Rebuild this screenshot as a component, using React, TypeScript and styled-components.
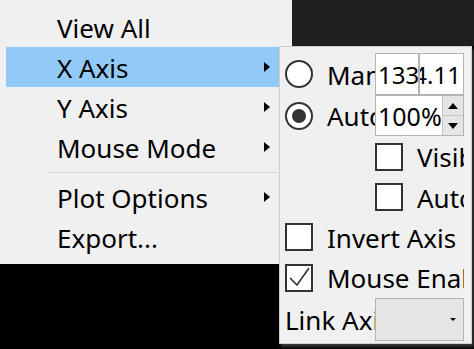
import React from "react";
import styled, { createGlobalStyle } from "styled-components";

const GlobalStyle = createGlobalStyle`
  html, body { margin: 0; padding: 0; background: #000; }
  body { font-family: "Noto Sans", "Open Sans", sans-serif; }
  * { box-sizing: border-box; }
`;

const Screen = styled.div`
  position: relative;
  width: 474px;
  height: 349px;
  overflow: hidden;
  background: #000;
  display: flex;
  flex-direction: column;
`;

const TopStrip = styled.div`
  height: 46px;
  background: #1f1f1f;
`;

const Menu = styled.div`
  position: absolute;
  left: 0;
  top: 0;
  width: 292px;
  height: 264px;
  padding: 7px 0;
  background: #f0f0f0;
  display: flex;
  flex-direction: column;
  font-size: 26px;
  color: #000;
`;

const MenuItem = styled.div<{ $active?: boolean }>`
  height: 40px;
  flex: none;
  margin: 0 6px;
  padding: 2px 16px 0 51px;
  display: flex;
  align-items: center;
  background: ${(p) => (p.$active ? "#91c9f7" : "transparent")};
  line-height: 38px;
  white-space: nowrap;
`;

const ItemLabel = styled.span`
  flex: 1;
`;

const SubArrow = styled.span`
  width: 0;
  height: 0;
  margin-top: -3px;
  border-left: 6px solid #000;
  border-top: 5px solid transparent;
  border-bottom: 5px solid transparent;
`;

const Separator = styled.div`
  height: 10px;
  flex: none;
  margin: 0 15px 0 48px;
  display: flex;
  align-items: center;
  &::before {
    content: "";
    display: block;
    width: 100%;
    height: 1px;
    background: #d7d7d7;
  }
`;

const SubMenu = styled.div`
  position: absolute;
  left: 279px;
  top: 46px;
  width: 193px;
  height: 298px;
  background: #f0f0f0;
  border: 1px solid #cfcfcf;
  box-shadow: 2px 3px 3px rgba(120, 120, 120, 0.45);
  padding: 6px 0 0 5px;
  font-size: 26px;
  color: #000;
`;

const Grid = styled.div`
  display: grid;
  grid-template-columns: 90px 44px 45px;
  grid-template-rows: 42px 41px 41px 40px 40px 41px 43px;
`;

const Cell = styled.div<{ $col: string; $row: number }>`
  grid-column: ${(p) => p.$col};
  grid-row: ${(p) => p.$row};
  display: flex;
  align-items: center;
  gap: 14px;
  overflow: hidden;
  white-space: nowrap;
  min-width: 0;
`;

const RadioCircle = styled.span<{ $checked?: boolean }>`
  flex: none;
  width: 28px;
  height: 28px;
  border-radius: 50%;
  border: 2px solid #333;
  background: #fff;
  display: flex;
  align-items: center;
  justify-content: center;
  &::after {
    content: "";
    display: ${(p) => (p.$checked ? "block" : "none")};
    width: 14px;
    height: 14px;
    border-radius: 50%;
    background: #333;
  }
`;

const CheckBox = styled.span`
  flex: none;
  width: 28px;
  height: 28px;
  border: 2px solid #333;
  background: #fff;
  display: flex;
  align-items: center;
  justify-content: center;
`;

const Label = styled.span`
  padding-top: 1px;
`;

const LineEdit = styled.div<{ $align: "start" | "end" }>`
  grid-column: ${(p) => (p.$align === "start" ? "2" : "3")};
  grid-row: 1;
  background: #fff;
  border: 1px solid #b4b4b4;
  display: flex;
  align-items: center;
  justify-content: ${(p) => (p.$align === "start" ? "flex-start" : "flex-end")};
  padding: 0 2px;
  overflow: hidden;
  font-size: 24px;
  white-space: nowrap;
`;

const SpinBox = styled.div`
  grid-column: 2 / 4;
  grid-row: 2;
  background: #fff;
  border: 1px solid #b4b4b4;
  display: flex;
  overflow: hidden;
`;

const SpinText = styled.div`
  flex: 1;
  display: flex;
  align-items: center;
  padding-left: 2px;
  font-size: 25px;
  overflow: hidden;
  white-space: nowrap;
`;

const SpinButtons = styled.div`
  width: 21px;
  display: flex;
  flex-direction: column;
`;

const SpinButton = styled.div<{ $dir: "up" | "down" }>`
  flex: 1;
  background: #e5e5e5;
  border-left: 1px solid #c4c4c4;
  border-bottom: ${(p) => (p.$dir === "up" ? "1px solid #c4c4c4" : "none")};
  display: flex;
  align-items: center;
  justify-content: center;
  &::after {
    content: "";
    width: 0;
    height: 0;
    border-left: 5px solid transparent;
    border-right: 5px solid transparent;
    ${(p) =>
      p.$dir === "up"
        ? "border-bottom: 6px solid #000;"
        : "border-top: 6px solid #000;"}
  }
`;

const ComboBox = styled.div`
  grid-column: 2 / 4;
  grid-row: 7;
  background: #e5e5e5;
  border: 1px solid #b4b4b4;
  display: flex;
  align-items: center;
  justify-content: flex-end;
  padding-right: 7px;
  &::after {
    content: "";
    width: 0;
    height: 0;
    border-left: 3px solid transparent;
    border-right: 3px solid transparent;
    border-top: 3px solid #000;
  }
`;

const Check = () => (
  <svg width="24" height="24" viewBox="0 0 24 24">
    <polyline
      points="3,12 10,19 22,2"
      fill="none"
      stroke="#333"
      strokeWidth="1.6"
    />
  </svg>
);

export default function App() {
  return (
    <>
      <GlobalStyle />
      <Screen>
        <TopStrip />
        <Menu>
          <MenuItem>
            <ItemLabel>View All</ItemLabel>
          </MenuItem>
          <MenuItem $active>
            <ItemLabel>X Axis</ItemLabel>
            <SubArrow />
          </MenuItem>
          <MenuItem>
            <ItemLabel>Y Axis</ItemLabel>
            <SubArrow />
          </MenuItem>
          <MenuItem>
            <ItemLabel>Mouse Mode</ItemLabel>
            <SubArrow />
          </MenuItem>
          <Separator />
          <MenuItem>
            <ItemLabel>Plot Options</ItemLabel>
            <SubArrow />
          </MenuItem>
          <MenuItem>
            <ItemLabel>Export...</ItemLabel>
          </MenuItem>
        </Menu>
        <SubMenu>
          <Grid>
            <Cell $col="1" $row={1}>
              <RadioCircle />
              <Label>Manual</Label>
            </Cell>
            <LineEdit $align="start">1334.11</LineEdit>
            <LineEdit $align="end">1334.11</LineEdit>
            <Cell $col="1" $row={2}>
              <RadioCircle $checked />
              <Label>Auto</Label>
            </Cell>
            <SpinBox>
              <SpinText>100%</SpinText>
              <SpinButtons>
                <SpinButton $dir="up" />
                <SpinButton $dir="down" />
              </SpinButtons>
            </SpinBox>
            <Cell $col="2 / 4" $row={3}>
              <CheckBox />
              <Label>Visible Data Only</Label>
            </Cell>
            <Cell $col="2 / 4" $row={4}>
              <CheckBox />
              <Label>Auto Pan Only</Label>
            </Cell>
            <Cell $col="1 / 4" $row={5}>
              <CheckBox />
              <Label>Invert Axis</Label>
            </Cell>
            <Cell $col="1 / 4" $row={6}>
              <CheckBox>
                <Check />
              </CheckBox>
              <Label>Mouse Enabled</Label>
            </Cell>
            <Cell $col="1" $row={7}>
              <Label>Link Axis:</Label>
            </Cell>
            <ComboBox />
          </Grid>
        </SubMenu>
      </Screen>
    </>
  );
}
